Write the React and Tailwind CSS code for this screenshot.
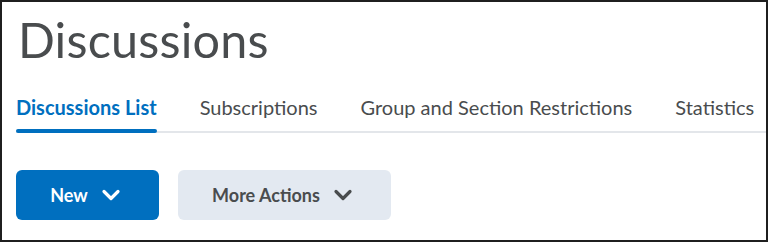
import { ChevronDown } from "lucide-react";

const tabs = ["Discussions List", "Subscriptions", "Group and Section Restrictions", "Statistics"];

export default function App() {
  return (
    <div className="w-[768px] h-[242px] overflow-hidden border-2 border-[#1f1f1f] bg-white font-['Lato',sans-serif] text-[#494c4e]">
      <div className="pl-[14px]">
        <h1 className="pt-[9px] pl-[2px] text-[48.5px] leading-[56px] font-normal tracking-[0.2px]">Discussions</h1>

        {/* tabs */}
        <div className="mt-[29px] flex gap-[43px] border-b-2 border-[#e3e6ea] whitespace-nowrap">
          {tabs.map((t, i) => (
            <div
              key={t}
              className={
                i === 0
                  ? "relative shrink-0 pb-[13px] text-[20px] leading-[22px] font-bold text-[#006fbf]"
                  : "relative shrink-0 pb-[13px] text-[20px] leading-[22px] text-[#494c4e]"
              }
            >
              {t}
              {i === 0 && <span className="absolute left-0 right-0 -bottom-[2px] h-[4px] rounded-full bg-[#006fbf]" />}
            </div>
          ))}
        </div>

        {/* actions */}
        <div className="mt-[37px] flex gap-[19px]">
          <button className="flex h-[50px] w-[143px] items-center justify-center gap-[9px] rounded-[6px] bg-[#006fbf] text-[18px] font-bold text-white">
            New
            <ChevronDown size={28} strokeWidth={2.75} />
          </button>
          <button className="flex h-[50px] w-[213px] items-center justify-center gap-[9px] rounded-[6px] bg-[#e3e9f1] text-[18px] font-bold text-[#494c4e]">
            More Actions
            <ChevronDown size={28} strokeWidth={2.75} />
          </button>
        </div>
      </div>
    </div>
  );
}
